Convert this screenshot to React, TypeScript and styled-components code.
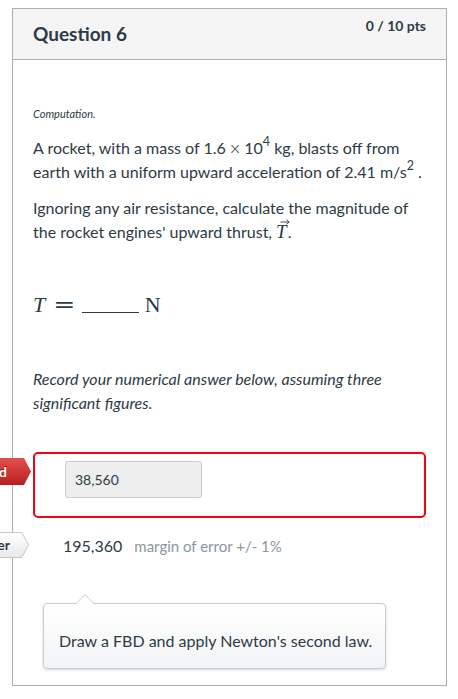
import React from "react";
import styled, { createGlobalStyle } from "styled-components";

const Global = createGlobalStyle`
  html, body { margin: 0; padding: 0; background: #fff; }
  body { font-family: Lato, "Open Sans", "Liberation Sans", sans-serif; color: #2d3b45; }
  * { box-sizing: border-box; }
`;

const Page = styled.div`
  width: 458px;
  height: 699px;
  padding: 8px 11px 0 12px;
  overflow: hidden;
`;

const Card = styled.section`
  border: 1px solid #aeaeae;
  background: #fff;
`;

const Header = styled.header`
  display: flex;
  justify-content: space-between;
  align-items: flex-start;
  height: 51px;
  padding: 0 20px;
  background: #f5f5f5;
  border-bottom: 1px solid #aeaeae;
`;

const Title = styled.h2`
  margin: 0;
  font-size: 19px;
  font-weight: 700;
  line-height: 50px;
`;

const Points = styled.div`
  padding-top: 7px;
  font-size: 14px;
  font-weight: 700;
  line-height: 20px;
  color: #2d3b45;
`;

const Body = styled.div`
  padding: 46px 20px 16px;
`;

const Note = styled.p`
  margin: 0;
  font-size: 11px;
  font-style: italic;
  line-height: 16px;
`;

const Para = styled.p<{ $top: number; $italic?: boolean }>`
  margin: ${(p) => p.$top}px 0 0;
  font-size: 16px;
  line-height: 24px;
  font-style: ${(p) => (p.$italic ? "italic" : "normal")};
`;

const Sup = styled.sup`
  font-size: 12.5px;
  line-height: 0;
  vertical-align: 8px;
`;

const Times = styled.span`
  font-family: "DejaVu Sans", sans-serif;
  font-weight: 300;
  font-size: 15px;
  line-height: 0;
  margin: 0 3px;
`;

const VecVar = styled.span`
  position: relative;
  display: inline-block;
  font-family: "Liberation Serif", "DejaVu Serif", serif;
  font-style: italic;
  font-size: 19px;
  line-height: 16px;
  padding-right: 1px;
`;

const VecArrow = styled.svg`
  position: absolute;
  left: 4px;
  top: -5px;
  width: 10px;
  height: 6px;
`;

const Equation = styled.div`
  display: flex;
  align-items: baseline;
  margin-top: 46px;
  height: 30px;
  font-family: "Liberation Serif", "DejaVu Serif", serif;
  font-size: 22px;
  line-height: 30px;
`;

const EqVar = styled.span`
  font-style: italic;
`;

const EqSign = styled.span`
  font-family: "DejaVu Serif", serif;
  font-size: 22px;
  margin: 0 8px 0 10px;
  transform: scaleX(1.2);
`;

const Blank = styled.span`
  display: inline-block;
  width: 57px;
  border-bottom: 1px solid #2d3b45;
  margin-right: 6px;
  transform: translateY(1px);
`;

const AnswerBlock = styled.div`
  position: relative;
  margin-top: 37px;
  border: 2px solid #ee0612;
  border-radius: 5px;
  padding: 7px 30px 18px;
`;

const Input = styled.div`
  width: 137px;
  height: 37px;
  padding: 0 9px;
  display: flex;
  align-items: center;
  background: #eeeeee;
  border: 1px solid #cccccc;
  border-radius: 3px;
  font-size: 14px;
  color: #2d3b45;
`;

const Tag = styled.div<{ $kind: "wrong" | "right" }>`
  position: absolute;
  left: -113px;
  width: 109px;
  height: ${(p) => (p.$kind === "wrong" ? 27 : 26)}px;
  padding-right: ${(p) => (p.$kind === "wrong" ? 24 : 19)}px;
  display: flex;
  align-items: center;
  justify-content: flex-end;
  font-size: 14px;
  font-weight: 700;
  white-space: nowrap;
  clip-path: polygon(0 0, calc(100% - 7px) 0, 100% 50%, calc(100% - 7px) 100%, 0 100%);
  ${(p) =>
    p.$kind === "wrong"
      ? `top: 4px;
         color: #fff;
         background: linear-gradient(#e2504d, #b9201f);
         text-shadow: 0 -1px 0 #8a1010;`
      : `top: -2px;
         color: #2d3b45;
         background: #c8c8c8;`}
`;

const TagFace = styled.span`
  position: absolute;
  inset: 1px;
  clip-path: polygon(0 0, calc(100% - 6.5px) 0, 100% 50%, calc(100% - 6.5px) 100%, 0 100%);
  background: linear-gradient(#ffffff, #e9e9e9);
`;

const TagText = styled.span`
  position: relative;
`;

const CorrectRow = styled.div`
  position: relative;
  display: flex;
  align-items: baseline;
  gap: 12px;
  margin-top: 16px;
  padding-left: 30px;
  line-height: 24px;
`;

const CorrectValue = styled.span`
  font-size: 16px;
`;

const Margin = styled.span`
  font-size: 15px;
  color: #8b969e;
`;

const Tooltip = styled.div`
  position: relative;
  margin: 45px 0 0 10px;
  width: 343px;
  padding: 27px 6px 17px 15px;
  background: linear-gradient(#ffffff, #f3f4f6);
  border: 1px solid #c7cdd1;
  border-radius: 4px;
  box-shadow: 0 1px 3px rgba(0, 0, 0, 0.15);
  font-size: 16px;
  line-height: 20px;
  white-space: nowrap;
  color: #2d3b45;

  &::before {
    content: "";
    position: absolute;
    left: 31px;
    top: -10px;
    width: 0;
    height: 0;
    border-left: 10px solid transparent;
    border-right: 10px solid transparent;
    border-bottom: 10px solid #c7cdd1;
  }
  &::after {
    content: "";
    position: absolute;
    left: 32px;
    top: -9px;
    width: 0;
    height: 0;
    border-left: 9px solid transparent;
    border-right: 9px solid transparent;
    border-bottom: 9px solid #ffffff;
  }
`;

export default function App() {
  return (
    <Page>
      <Global />
      <Card>
        <Header>
          <Title>Question 6</Title>
          <Points>0 / 10 pts</Points>
        </Header>
        <Body>
          <Note>Computation.</Note>
          <Para $top={14}>
            A rocket, with a mass of 1.6<Times>×</Times>10<Sup>4</Sup> kg, blasts off from earth
            with a uniform upward acceleration of 2.41 m/s<Sup>2</Sup> .
          </Para>
          <Para $top={12}>
            Ignoring any air resistance, calculate the magnitude of the rocket engines' upward
            thrust,{" "}
            <VecVar>
              T
              <VecArrow viewBox="0 0 10 6" aria-hidden="true">
                <path d="M0.5 3 H9 M6.5 0.8 L9.2 3 L6.5 5.2" stroke="#2d3b45" strokeWidth="0.9" fill="none" />
              </VecArrow>
            </VecVar>
            .
          </Para>
          <Equation>
            <EqVar>T</EqVar>
            <EqSign>=</EqSign>
            <Blank />
            <span>N</span>
          </Equation>
          <Para $top={47} $italic>
            Record your numerical answer below, assuming three significant figures.
          </Para>
          <AnswerBlock>
            <Tag $kind="wrong">
              <TagText>You Answered</TagText>
            </Tag>
            <Input>38,560</Input>
          </AnswerBlock>
          <CorrectRow>
            <Tag $kind="right">
              <TagFace />
              <TagText>Correct Answer</TagText>
            </Tag>
            <CorrectValue>195,360</CorrectValue>
            <Margin>margin of error +/- 1%</Margin>
          </CorrectRow>
          <Tooltip>Draw a FBD and apply Newton's second law.</Tooltip>
        </Body>
      </Card>
    </Page>
  );
}
